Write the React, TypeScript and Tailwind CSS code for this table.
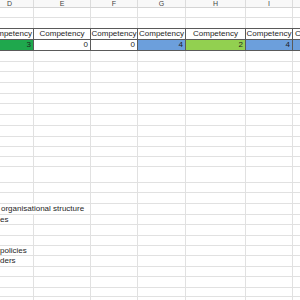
const cols = [
  { label: 'D', w: 'w-[48px]' },
  { label: 'E', w: 'w-[57px]' },
  { label: 'F', w: 'w-[47px]' },
  { label: 'G', w: 'w-[48px]' },
  { label: 'H', w: 'w-[60px]' },
  { label: 'I', w: 'w-[47px]' },
  { label: '', w: 'w-[60px]' },
];

const scores = [
  { v: '3', bg: 'bg-[#1fa84d]' },
  { v: '0', bg: 'bg-white' },
  { v: '0', bg: 'bg-white' },
  { v: '4', bg: 'bg-[#6c9fdc]' },
  { v: '2', bg: 'bg-[#92d050]' },
  { v: '4', bg: 'bg-[#6c9fdc]' },
];

// blank sheet rows below the scores, heights as drawn
const rows: { h: string; text?: string; span?: boolean }[] = [
  { h: 'h-[11px]' },
  { h: 'h-[10px]' },
  { h: 'h-[11px]' },
  { h: 'h-[11px]' },
  { h: 'h-[10px]' },
  { h: 'h-[11px]' },
  { h: 'h-[11px]' },
  { h: 'h-[11px]' },
  { h: 'h-[10px]' },
  { h: 'h-[10px]' },
  { h: 'h-[10px]' },
  { h: 'h-[16px]' },
  { h: 'h-[10px]' },
  { h: 'h-[11px]' },
  { h: 'h-[11px]', text: 'organisational structure', span: true },
  { h: 'h-[10px]', text: 'es' },
  { h: 'h-[11px]' },
  { h: 'h-[10px]' },
  { h: 'h-[10px]', text: 'policies' },
  { h: 'h-[11px]', text: 'ders' },
  { h: 'h-[10px]' },
  { h: 'h-[11px]' },
  { h: 'h-[9px]' },
  { h: 'h-[11px]' },
];

export default function App() {
  return (
    <div className="w-[300px] h-[300px] overflow-hidden bg-white text-[8px] leading-none text-[#1e1e1e]" style={{ fontFamily: '"Liberation Sans", Arial, sans-serif' }}>
      <div className="-ml-[14px] w-[400px]">
        {/* Column letters */}
        <div className="flex h-[8px] bg-[#f8f8f8] border-b border-[#d4d4d4]">
          {cols.map((c, i) => (
            <div key={i} className={`${c.w} shrink-0 border-r border-[#dcdcdc] flex items-center justify-center text-[7px] text-[#444]`}>
              {c.label}
            </div>
          ))}
        </div>

        {/* Empty rows */}
        <div className="flex h-[10px] border-b border-[#e1e1e1]">
          {cols.map((c, i) => (
            <div key={i} className={`${c.w} shrink-0 border-r border-[#e1e1e1]`} />
          ))}
        </div>
        <div className="flex h-[10px]">
          {cols.map((c, i) => (
            <div key={i} className={`${c.w} shrink-0 border-r border-[#e1e1e1]`} />
          ))}
        </div>

        {/* Competency headings */}
        <div className="flex h-[12px] border-y border-[#5a5a5a]">
          {cols.slice(0, 6).map((c, i) => (
            <div key={i} className={`${c.w} shrink-0 border-r border-[#5a5a5a] flex items-center justify-center overflow-hidden whitespace-nowrap`}>
              Competency
            </div>
          ))}
          <div className="w-[60px] shrink-0 flex items-center pl-[2px] whitespace-nowrap">Competency</div>
        </div>

        {/* Scores */}
        <div className="flex h-[11px]">
          {scores.map((s, i) => (
            <div key={i} className={`${cols[i].w} ${s.bg} shrink-0 border-r border-b border-[#5a5a5a] flex items-center justify-end pr-[2px]`}>
              {s.v}
            </div>
          ))}
          <div className="w-[60px] shrink-0 bg-[#6c9fdc] border-b border-[#5a5a5a]" />
        </div>

        {rows.map((r, ri) => (
          <div key={ri} className={`flex ${r.h} border-b border-[#e1e1e1]`}>
            {r.span ? (
              <>
                <div className="w-[105px] shrink-0 border-r border-[#e1e1e1] flex items-center pl-[15px] whitespace-nowrap">{r.text}</div>
                {cols.slice(2).map((c, i) => (
                  <div key={i} className={`${c.w} shrink-0 border-r border-[#e1e1e1]`} />
                ))}
              </>
            ) : (
              cols.map((c, ci) => (
                <div key={ci} className={`${c.w} shrink-0 border-r border-[#e1e1e1] flex items-center whitespace-nowrap ${r.text && ci === 0 ? 'pl-[14px]' : ''}`}>
                  {ci === 0 ? r.text : null}
                </div>
              ))
            )}
          </div>
        ))}
      </div>
    </div>
  );
}
